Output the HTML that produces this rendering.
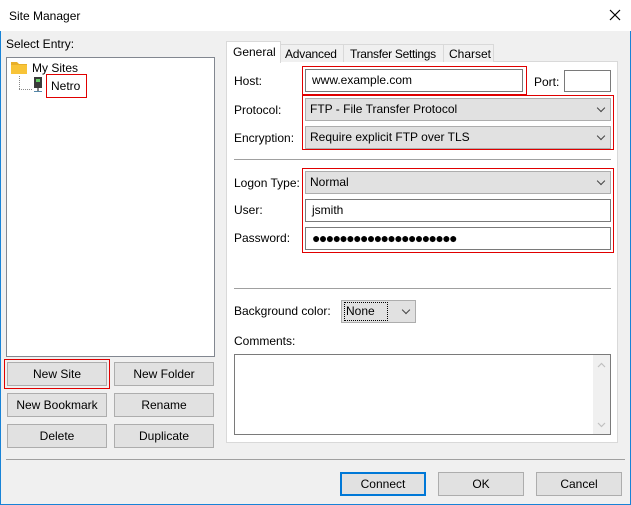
<!DOCTYPE html><html><head><style>
*{box-sizing:border-box;margin:0;padding:0}
body{width:631px;height:505px;background:#f0f0f0;font-family:"Liberation Sans",sans-serif;font-size:12px;color:#000;position:relative;overflow:hidden}
.a{position:absolute}
.t{position:absolute;white-space:nowrap;line-height:14px}
.btn{position:absolute;background:#e1e1e1;border:1px solid #adadad;text-align:center;line-height:22px}
.in{position:absolute;background:#fff;border:1px solid #7a7a7a;padding-left:6px;line-height:21px}
.cb{position:absolute;background:#e1e1e1;border:1px solid #adadad;padding-left:4px;line-height:21px}
.cb:after{content:"";position:absolute;right:6px;top:6px;width:5px;height:5px;border-right:1px solid #444;border-bottom:1px solid #444;transform:rotate(45deg)}
.red{position:absolute;border:1px solid #e00000}
.sep{position:absolute;height:1px;background:#a0a0a0}
</style></head><body>
<div class="a" style="left:0;top:0;width:631px;height:31px;background:#fff"></div>
<div class="t" style="left:9px;top:9px">Site Manager</div>
<svg class="a" style="left:609px;top:9px" width="12" height="12"><path d="M1 1L11 11M11 1L1 11" stroke="#000" stroke-width="1.2"/></svg>
<div class="a" style="left:0;top:31px;width:1px;height:474px;background:#1883d7"></div>
<div class="a" style="right:0;top:31px;width:1px;height:474px;background:#1883d7"></div>
<div class="a" style="left:0;bottom:0;width:631px;height:1px;background:#1883d7"></div>

<div class="t" style="left:6px;top:37px">Select Entry:</div>
<div class="a" style="left:6px;top:57px;width:209px;height:300px;background:#fff;border:1px solid #828790"></div>
<svg class="a" style="left:11px;top:61px" width="18" height="14"><path d="M0 1h6l2 2h8v10H0z" fill="#e8b02a"/><path d="M0 4h16v9H0z" fill="#f8c438"/></svg>
<div class="t" style="left:32px;top:61px">My Sites</div>
<div class="a" style="left:19px;top:76px;height:13px;border-left:1px dotted #888"></div>
<div class="a" style="left:19px;top:89px;width:13px;border-top:1px dotted #888"></div>
<svg class="a" style="left:34px;top:77px" width="8" height="16"><rect x="0" y="0" width="8" height="11" fill="#3a3a3a"/><rect x="2" y="2" width="4" height="3" fill="#6c6"/><rect x="3" y="11" width="2" height="3" fill="#888"/><rect x="0" y="14" width="8" height="1" fill="#58a"/></svg>
<div class="red" style="left:46px;top:74px;width:41px;height:24px"></div>
<div class="t" style="left:51px;top:79px">Netro</div>

<div class="red" style="left:4px;top:359px;width:106px;height:30px"></div>
<div class="btn" style="left:7px;top:362px;width:100px;height:24px">New Site</div>
<div class="btn" style="left:114px;top:362px;width:100px;height:24px">New Folder</div>
<div class="btn" style="left:7px;top:393px;width:100px;height:24px">New Bookmark</div>
<div class="btn" style="left:114px;top:393px;width:100px;height:24px">Rename</div>
<div class="btn" style="left:7px;top:424px;width:100px;height:24px">Delete</div>
<div class="btn" style="left:114px;top:424px;width:100px;height:24px">Duplicate</div>

<div class="a" style="left:226px;top:61px;width:392px;height:382px;background:#fff;border:1px solid #d9d9d9"></div>
<div class="a" style="left:280px;top:44px;width:64px;height:18px;background:#f0f0f0;border:1px solid #d9d9d9;border-bottom:none"></div>
<div class="a" style="left:343px;top:44px;width:101px;height:18px;background:#f0f0f0;border:1px solid #d9d9d9;border-bottom:none"></div>
<div class="a" style="left:443px;top:44px;width:51px;height:18px;background:#f0f0f0;border:1px solid #d9d9d9;border-bottom:none"></div>
<div class="a" style="left:226px;top:41px;width:55px;height:22px;background:#fff;border:1px solid #d9d9d9;border-bottom:none"></div>
<div class="t" style="left:233px;top:45px">General</div>
<div class="t" style="left:285px;top:47px;letter-spacing:-0.2px">Advanced</div>
<div class="t" style="left:350px;top:47px;letter-spacing:-0.3px">Transfer Settings</div>
<div class="t" style="left:449px;top:47px">Charset</div>

<div class="t" style="left:234px;top:74px">Host:</div>
<div class="red" style="left:302px;top:66px;width:225px;height:29px"></div>
<div class="in" style="left:305px;top:69px;width:218px;height:23px">www.example.com</div>
<div class="t" style="left:534px;top:75px">Port:</div>
<div class="in" style="left:564px;top:70px;width:47px;height:22px"></div>

<div class="t" style="left:234px;top:103px">Protocol:</div>
<div class="t" style="left:234px;top:131px">Encryption:</div>
<div class="red" style="left:302px;top:95px;width:312px;height:55px"></div>
<div class="cb" style="left:305px;top:98px;width:306px;height:23px">FTP - File Transfer Protocol</div>
<div class="cb" style="left:305px;top:126px;width:306px;height:23px">Require explicit FTP over TLS</div>
<div class="sep" style="left:234px;top:159px;width:377px"></div>

<div class="t" style="left:234px;top:176px">Logon Type:</div>
<div class="t" style="left:234px;top:203px">User:</div>
<div class="t" style="left:234px;top:231px">Password:</div>
<div class="red" style="left:302px;top:168px;width:312px;height:85px"></div>
<div class="cb" style="left:305px;top:171px;width:306px;height:23px">Normal</div>
<div class="in" style="left:305px;top:199px;width:306px;height:23px">jsmith</div>
<div class="in" style="left:305px;top:227px;width:306px;height:23px;font-size:14px;letter-spacing:-1.6px;line-height:20px">●●●●●●●●●●●●●●●●●●●●●</div>
<div class="sep" style="left:234px;top:288px;width:377px"></div>

<div class="t" style="left:234px;top:304px">Background color:</div>
<div class="cb" style="left:341px;top:300px;width:75px;height:23px;padding-left:2px"><span style="border:1px dotted #000;padding:0 12px 0 1px;line-height:17px;display:inline-block;margin-top:1px">None</span></div>
<div class="t" style="left:234px;top:334px">Comments:</div>
<div class="a" style="left:234px;top:354px;width:377px;height:81px;background:#fff;border:1px solid #7a7a7a"></div>
<div class="a" style="left:593px;top:355px;width:17px;height:79px;background:#f0f0f0"></div>
<svg class="a" style="left:597px;top:362px" width="9" height="6"><path d="M1 5L4.5 1.5L8 5" stroke="#c0c0c0" fill="none" stroke-width="1.2"/></svg>
<svg class="a" style="left:597px;top:422px" width="9" height="6"><path d="M1 1L4.5 4.5L8 1" stroke="#c0c0c0" fill="none" stroke-width="1.2"/></svg>

<div class="sep" style="left:6px;top:459px;width:619px"></div>
<div class="btn" style="left:340px;top:472px;width:86px;height:24px;border:2px solid #0078d7;line-height:20px">Connect</div>
<div class="btn" style="left:438px;top:472px;width:86px;height:24px">OK</div>
<div class="btn" style="left:536px;top:472px;width:86px;height:24px">Cancel</div>
</body></html>
